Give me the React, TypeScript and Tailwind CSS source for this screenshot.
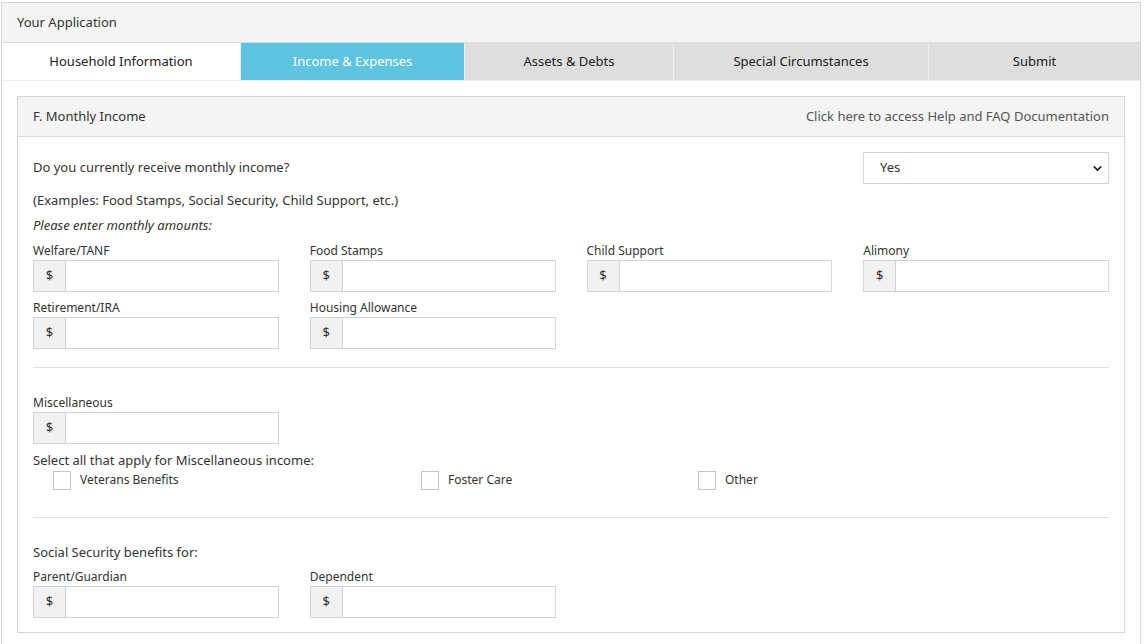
import { ChevronDown } from "lucide-react";

function MoneyField({ label }: { label: string }) {
  return (
    <div>
      <div className="mb-[2px] text-[12px] leading-[15px] text-[#333]">{label}</div>
      <div className="flex h-[32px] border border-[#ccd5dd]">
        <span className="flex w-[32px] items-center justify-center border-r border-[#ccd5dd] bg-[#f1f1f1] text-[13px] text-[#333]">$</span>
        <input className="min-w-0 flex-1 bg-white outline-none" />
      </div>
    </div>
  );
}

const tabs = [
  { name: "Household Information", w: "w-[239px]", cls: "bg-white text-[#222]" },
  { name: "Income & Expenses", w: "w-[224px]", cls: "bg-[#5fc4e2] text-white" },
  { name: "Assets & Debts", w: "w-[209px]", cls: "bg-[#dedede] text-[#222]" },
  { name: "Special Circumstances", w: "w-[255px]", cls: "bg-[#dedede] text-[#222]" },
  { name: "Submit", w: "flex-1", cls: "bg-[#dedede] text-[#222]" },
];

export default function App() {
  return (
    <div className="h-[644px] bg-white pl-[1px] pr-[3px] pt-[2px] font-['Lato','Open_Sans',sans-serif] text-[13px] text-[#333]">
      <div className="h-[642px] border border-b-0 border-[#d6d6d6]">
        <div className="flex h-[40px] items-center border-b border-[#dcdcdc] bg-[#f4f4f4] px-[15px] text-[13px] text-[#333]">
          Your Application
        </div>
        <div className="flex h-[38px] border-b border-[#ededed]">
          {tabs.map((t) => (
            <div key={t.name} className={`${t.w} ${t.cls} flex items-center justify-center border-r border-[#ededed] text-[13px] last:border-r-0`}>
              {t.name}
            </div>
          ))}
        </div>
        <div className="px-[15px] pt-[15px]">
          <div className="border border-[#d6d6d6]">
            <div className="flex h-[40px] items-center justify-between border-b border-[#dcdcdc] bg-[#f4f4f4] px-[15px] text-[13px]">
              <span>F. Monthly Income</span>
              <span className="text-[#555]">Click here to access Help and FAQ Documentation</span>
            </div>
            <div className="px-[15px] pb-[14px] pt-[15px]">
              <div className="flex items-center justify-between">
                <span>Do you currently receive monthly income?</span>
                <div className="flex h-[32px] w-[246px] items-center justify-between border border-[#ccd5dd] px-[16px] pr-[4px]">
                  <span>Yes</span>
                  <ChevronDown size={13} strokeWidth={3} className="text-[#222]" />
                </div>
              </div>
              <div className="mt-[8px] leading-[16px]">(Examples: Food Stamps, Social Security, Child Support, etc.)</div>
              <div className="mt-[9px] italic leading-[16px]">Please enter monthly amounts:</div>
              <div className="mt-[10px] grid grid-cols-4 gap-x-[31px] gap-y-[8px]">
                <MoneyField label="Welfare/TANF" />
                <MoneyField label="Food Stamps" />
                <MoneyField label="Child Support" />
                <MoneyField label="Alimony" />
                <MoneyField label="Retirement/IRA" />
                <MoneyField label="Housing Allowance" />
              </div>
              <hr className="mt-[18px] border-[#e0e0e0]" />
              <div className="mt-[27px] grid grid-cols-4 gap-x-[31px]">
                <MoneyField label="Miscellaneous" />
              </div>
              <div className="mt-[8px] leading-[16px]">Select all that apply for Miscellaneous income:</div>
              <div className="mt-[3px] grid grid-cols-[368px_277px_1fr] pl-[20px] text-[12px]">
                {["Veterans Benefits", "Foster Care", "Other"].map((c) => (
                  <label key={c} className="flex items-center gap-[9px]">
                    <span className="h-[19px] w-[18px] border border-[#bfc5cc] bg-white" />
                    <span className="-mt-[2px]">{c}</span>
                  </label>
                ))}
              </div>
              <hr className="mt-[27px] border-[#e0e0e0]" />
              <div className="mt-[26px] leading-[16px]">Social Security benefits for:</div>
              <div className="mt-[9px] grid grid-cols-4 gap-x-[31px]">
                <MoneyField label="Parent/Guardian" />
                <MoneyField label="Dependent" />
              </div>
            </div>
          </div>
        </div>
      </div>
    </div>
  );
}
